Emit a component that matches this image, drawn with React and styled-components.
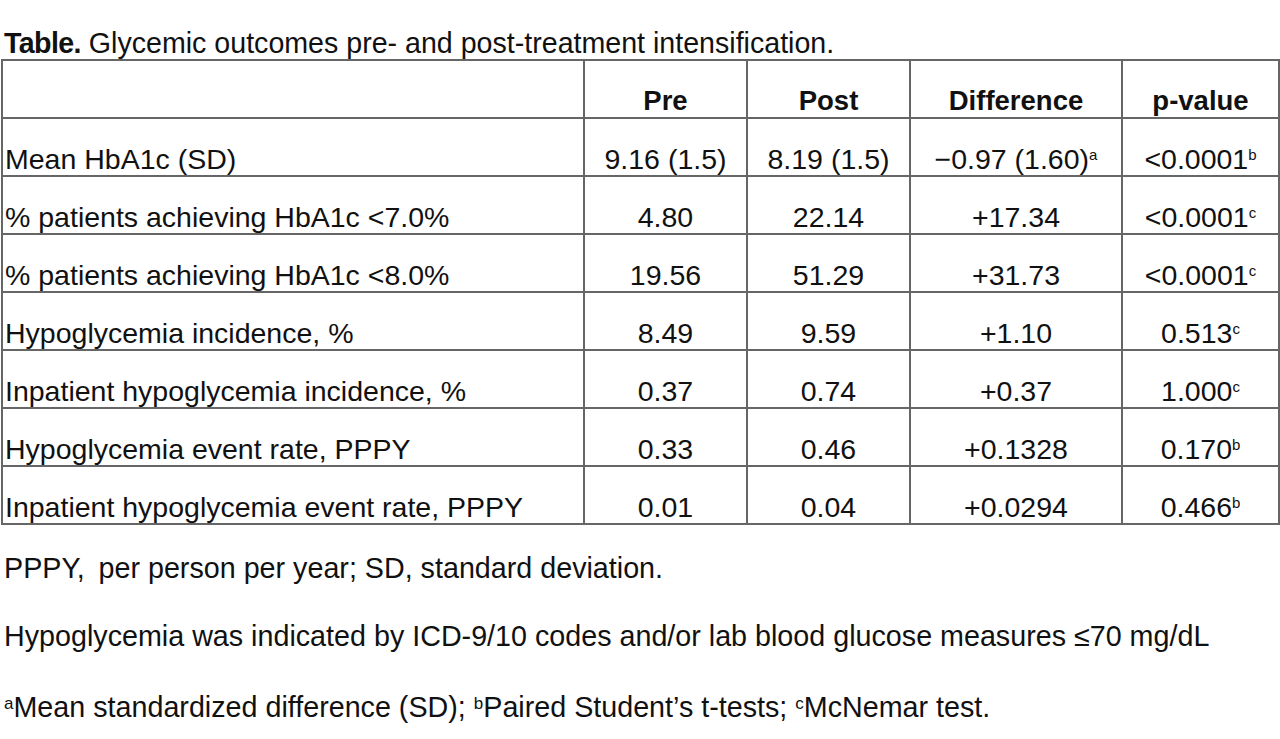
import styled, { createGlobalStyle } from "styled-components"

const GlobalStyle = createGlobalStyle`
  body {
    margin: 0;
    background: #fff;
    font-family: "Liberation Sans", Arial, sans-serif;
    color: #111;
  }
`

const rows = [
  ["Mean HbA1c (SD)", "9.16 (1.5)", "8.19 (1.5)", ["\u22120.97 (1.60)", "a"], ["<0.0001", "b"]],
  ["% patients achieving HbA1c <7.0%", "4.80", "22.14", ["+17.34"], ["<0.0001", "c"]],
  ["% patients achieving HbA1c <8.0%", "19.56", "51.29", ["+31.73"], ["<0.0001", "c"]],
  ["Hypoglycemia incidence, %", "8.49", "9.59", ["+1.10"], ["0.513", "c"]],
  ["Inpatient hypoglycemia incidence, %", "0.37", "0.74", ["+0.37"], ["1.000", "c"]],
  ["Hypoglycemia event rate, PPPY", "0.33", "0.46", ["+0.1328"], ["0.170", "b"]],
  ["Inpatient hypoglycemia event rate, PPPY", "0.01", "0.04", ["+0.0294"], ["0.466", "b"]],
]

export default function App () {
  return (
    <Page>
      <GlobalStyle />
      <Caption><b>Table.</b> Glycemic outcomes pre- and post-treatment intensification.</Caption>
      <Table>
        <colgroup>
          <col style={{ width: 582 }} />
          <col style={{ width: 163 }} />
          <col style={{ width: 163 }} />
          <col style={{ width: 212 }} />
          <col style={{ width: 157 }} />
        </colgroup>
        <thead>
          <tr>
            <Head />
            <Head>Pre</Head>
            <Head>Post</Head>
            <Head>Difference</Head>
            <Head>p-value</Head>
          </tr>
        </thead>
        <tbody>
          {rows.map(r => (
            <tr key={r[0]}>
              <Cell $left>{r[0]}</Cell>
              <Cell>{r[1]}</Cell>
              <Cell>{r[2]}</Cell>
              <Cell>{r[3][0]}{r[3][1] && <Sup>{r[3][1]}</Sup>}</Cell>
              <Cell>{r[4][0]}{r[4][1] && <Sup>{r[4][1]}</Sup>}</Cell>
            </tr>
          ))}
        </tbody>
      </Table>
      <Notes>
        <Note>PPPY,{"\u2009"} per person per year; SD, standard deviation.</Note>
        <Note>Hypoglycemia was indicated by ICD-9/10 codes and/or lab blood glucose measures ≤70 mg/dL</Note>
        <Note><NoteSup>a</NoteSup>Mean standardized difference (SD); <NoteSup>b</NoteSup>Paired Student’s t-tests; <NoteSup>c</NoteSup>McNemar test.</Note>
      </Notes>
    </Page>
  )
}

const Page = styled.div`
  width: 1280px;
  height: 739px;
  overflow: hidden;
  padding-top: 27px;
  box-sizing: border-box;
`
const Caption = styled.div`
  font-size: 28.6px;
  line-height: 32px;
  padding-left: 4px;
  white-space: nowrap;
  b { letter-spacing: -0.6px; }
`
const Table = styled.table`
  border-collapse: collapse;
  table-layout: fixed;
  width: 1278px;
  margin-left: 1px;
`
const Head = styled.th`
  height: 56px;
  border: 2px solid #666;
  font-size: 27.5px;
  line-height: 32px;
  font-weight: bold;
  text-align: center;
  vertical-align: bottom;
  padding: 0;
`
const Cell = styled.td`
  height: 56px;
  border: 2px solid #666;
  font-size: 28.5px;
  line-height: 32px;
  text-align: ${p => (p.$left ? "left" : "center")};
  vertical-align: bottom;
  padding: 0 0 0 ${p => (p.$left ? "2px" : "0")};
  white-space: nowrap;
`
const Sup = styled.span`
  font-size: 15px;
  vertical-align: 9px;
`
const NoteSup = styled(Sup)`
  font-size: 17px;
  vertical-align: 8px;
`
const Notes = styled.div`
  display: flex;
  flex-direction: column;
  gap: 34px;
  padding: 26px 0 0 4px;
`
const Note = styled.div`
  font-size: 28.7px;
  line-height: 34px;
  white-space: nowrap;
`
